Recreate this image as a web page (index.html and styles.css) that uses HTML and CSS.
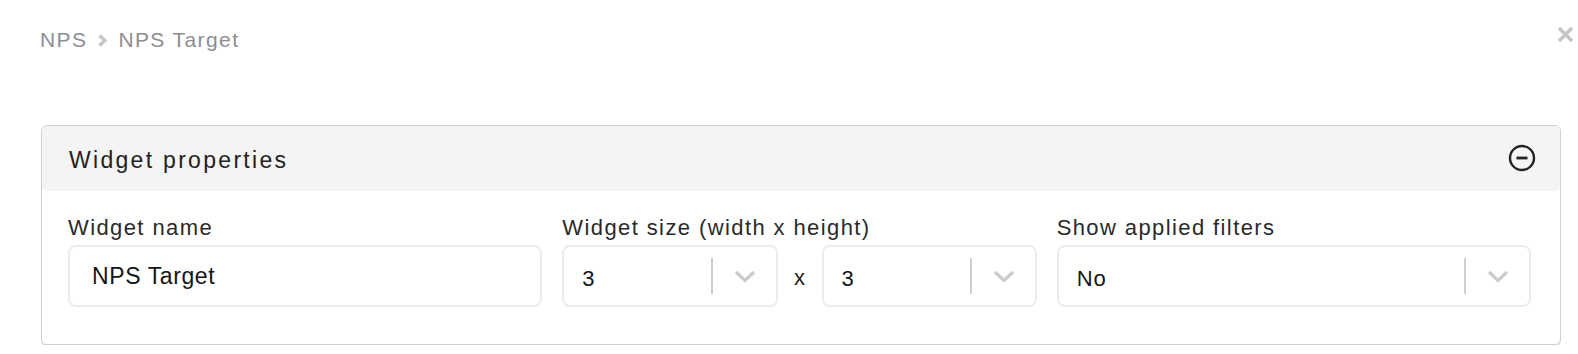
FILE: index.html
```html
<!DOCTYPE html>
<html lang="en">
<head>
<meta charset="utf-8">
<title>NPS Target</title>
<link rel="stylesheet" href="styles.css">
</head>
<body>
<div class="page">
  <div class="topbar">
    <nav class="crumbs">
      <span class="crumb">NPS</span>
      <svg class="crumb-sep" width="11" height="13" viewBox="0 0 11 13"><path d="M2.5 1.5 L7.8 6.5 L2.5 11.5" fill="none" stroke="#c8c8c8" stroke-width="3.6"/></svg>
      <span class="crumb">NPS Target</span>
    </nav>
    <button class="close" aria-label="Close">
      <svg width="17" height="17" viewBox="0 0 17 17"><path d="M2 2 L15 15 M15 2 L2 15" stroke="#c6c6c6" stroke-width="3.6"/></svg>
    </button>
  </div>

  <section class="card">
    <header class="card-head">
      <h2 class="card-title">Widget properties</h2>
      <svg class="collapse" width="28" height="28" viewBox="0 0 28 28"><circle cx="14" cy="14" r="12" fill="none" stroke="#222" stroke-width="2.4"/><path d="M8.5 14 H19.5" stroke="#222" stroke-width="2.8"/></svg>
    </header>
    <div class="card-body">
      <div class="field">
        <label class="label">Widget name</label>
        <div class="input"><span class="text">NPS Target</span></div>
      </div>
      <div class="field">
        <label class="label">Widget size (width x height)</label>
        <div class="pair">
          <div class="select">
            <span class="value">3</span>
            <span class="sep"></span>
            <svg class="chev" width="22" height="13" viewBox="0 0 22 13"><path d="M2 2 L11 10.5 L20 2" fill="none" stroke="#cccccc" stroke-width="3.4"/></svg>
          </div>
          <span class="times">x</span>
          <div class="select">
            <span class="value">3</span>
            <span class="sep"></span>
            <svg class="chev" width="22" height="13" viewBox="0 0 22 13"><path d="M2 2 L11 10.5 L20 2" fill="none" stroke="#cccccc" stroke-width="3.4"/></svg>
          </div>
        </div>
      </div>
      <div class="field">
        <label class="label">Show applied filters</label>
        <div class="select">
          <span class="value">No</span>
          <span class="sep"></span>
          <svg class="chev" width="22" height="13" viewBox="0 0 22 13"><path d="M2 2 L11 10.5 L20 2" fill="none" stroke="#cccccc" stroke-width="3.4"/></svg>
        </div>
      </div>
    </div>
  </section>
</div>
</body>
</html>
```

FILE: styles.css
```css
* { box-sizing: border-box; }
html, body { margin: 0; padding: 0; background: #ffffff; }
body {
  font-family: "Liberation Sans", Arial, Helvetica, sans-serif;
  color: #222;
}
.page {
  padding-top: 25px;
}
.topbar {
  display: flex;
  justify-content: space-between;
  align-items: flex-start;
  padding: 0 4px 0 40px;
  height: 30px;
}
.crumbs {
  display: flex;
  align-items: center;
  gap: 10px;
  font-size: 21px;
  line-height: 30px;
  letter-spacing: 1.4px;
  color: #8d8d92;
}
.crumb-sep { display: block; margin-top: 1px; }
.close {
  border: 0;
  background: none;
  padding: 0;
  margin-top: 1px;
  display: block;
  cursor: pointer;
}
.close svg { display: block; }

.card {
  margin: 70px 17px 0 41px;
  border: 1px solid #d0d0d3;
  border-radius: 6px;
  box-shadow: 0 1px 0 #c8c8cc;
}
.card-head {
  height: 65px;
  background: #f4f4f4;
  border-radius: 5px;
  display: flex;
  align-items: center;
  justify-content: space-between;
  padding: 3px 24px 0 27px;
}
.card-title {
  margin: 0;
  font-weight: normal;
  font-size: 23px;
  letter-spacing: 2.3px;
  color: #222;
}
.collapse { display: block; margin-top: -4px; }
.card-body {
  display: grid;
  grid-template-columns: 1fr 1fr 1fr;
  column-gap: 20px;
  padding: 25px 29px 37px 26px;
}
.field { display: flex; flex-direction: column; }
.label {
  font-size: 22px;
  line-height: 24px;
  letter-spacing: 1.4px;
  color: #2a2a2a;
  margin-bottom: 5px;
}
.input, .select {
  height: 62px;
  border: 2px solid #ececec;
  border-radius: 8px;
  background: #fff;
  display: flex;
  align-items: center;
  color: #151515;
}
.input { padding-left: 22px; }
.text {
  font-size: 23px;
  letter-spacing: 0.6px;
}
.select { padding: 0 0 0 18px; flex: 1; min-width: 0; }
.value {
  flex: 1;
  font-size: 22px;
  letter-spacing: 0.9px;
  margin-top: 6px;
}
.sep {
  width: 2px;
  height: 36px;
  background: #cfcfcf;
  margin-right: 21px;
}
.chev { display: block; margin-right: 20px; }
.pair {
  display: flex;
  align-items: center;
}
.times {
  width: 44px;
  text-align: center;
  font-size: 22px;
  color: #222;
  margin-top: 4px;
}
```
